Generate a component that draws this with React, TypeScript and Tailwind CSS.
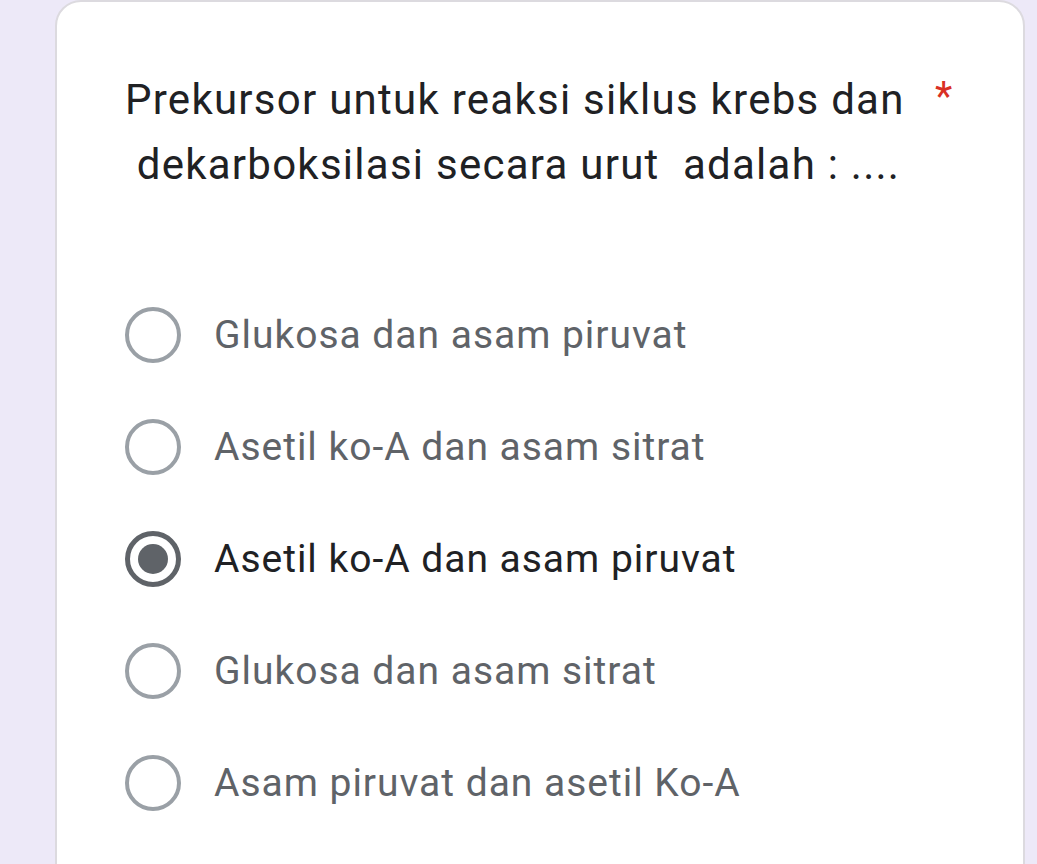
import React from 'react';

const options = [
  'Glukosa dan asam piruvat',
  'Asetil ko-A dan asam sitrat',
  'Asetil ko-A dan asam piruvat',
  'Glukosa dan asam sitrat',
  'Asam piruvat dan asetil Ko-A',
];

const selected = 2;

const Radio = ({ checked }: { checked: boolean }) => (
  <div
    className={
      checked
        ? 'w-[56px] h-[56px] rounded-full border-[5px] border-[#5f6368] flex items-center justify-center shrink-0'
        : 'w-[56px] h-[56px] rounded-full border-[4px] border-[#9aa0a6] shrink-0'
    }
  >
    {checked && <div className="w-[30px] h-[30px] rounded-full bg-[#5f6368]" />}
  </div>
);

const App = () => {
  return (
    <div
      className="w-[1037px] h-[864px] overflow-hidden bg-[#ede9f8]"
      style={{ fontFamily: 'Roboto, "Noto Sans", sans-serif' }}
    >
      <div className="ml-[55px] w-[970px] h-[880px] bg-white border-2 border-[#dcdadf] rounded-t-[26px] pl-[68px] pr-[40px] pt-[65px]">
        {/* Question */}
        <div className="flex items-start">
          <div className="text-[42px] leading-[65px] tracking-[0.03em] text-[#202124] whitespace-pre-wrap w-[800px]">
            {'Prekursor untuk reaksi siklus krebs dan\n dekarboksilasi secara urut  adalah : ....'}
          </div>
          <span className="text-[40px] leading-[65px] text-[#d93025] ml-[10px] -mt-[3px]">*</span>
        </div>

        {/* Options */}
        <div className="mt-[82px] flex flex-col">
          {options.map((opt, i) => (
            <div key={opt} className="flex items-center h-[112px]">
              <Radio checked={i === selected} />
              <span
                className={
                  'ml-[33px] text-[39px] tracking-[0.025em] ' +
                  (i === selected ? 'text-[#202124]' : 'text-[#5f6368]')
                }
              >
                {opt}
              </span>
            </div>
          ))}
        </div>
      </div>
    </div>
  );
};

export default App;
